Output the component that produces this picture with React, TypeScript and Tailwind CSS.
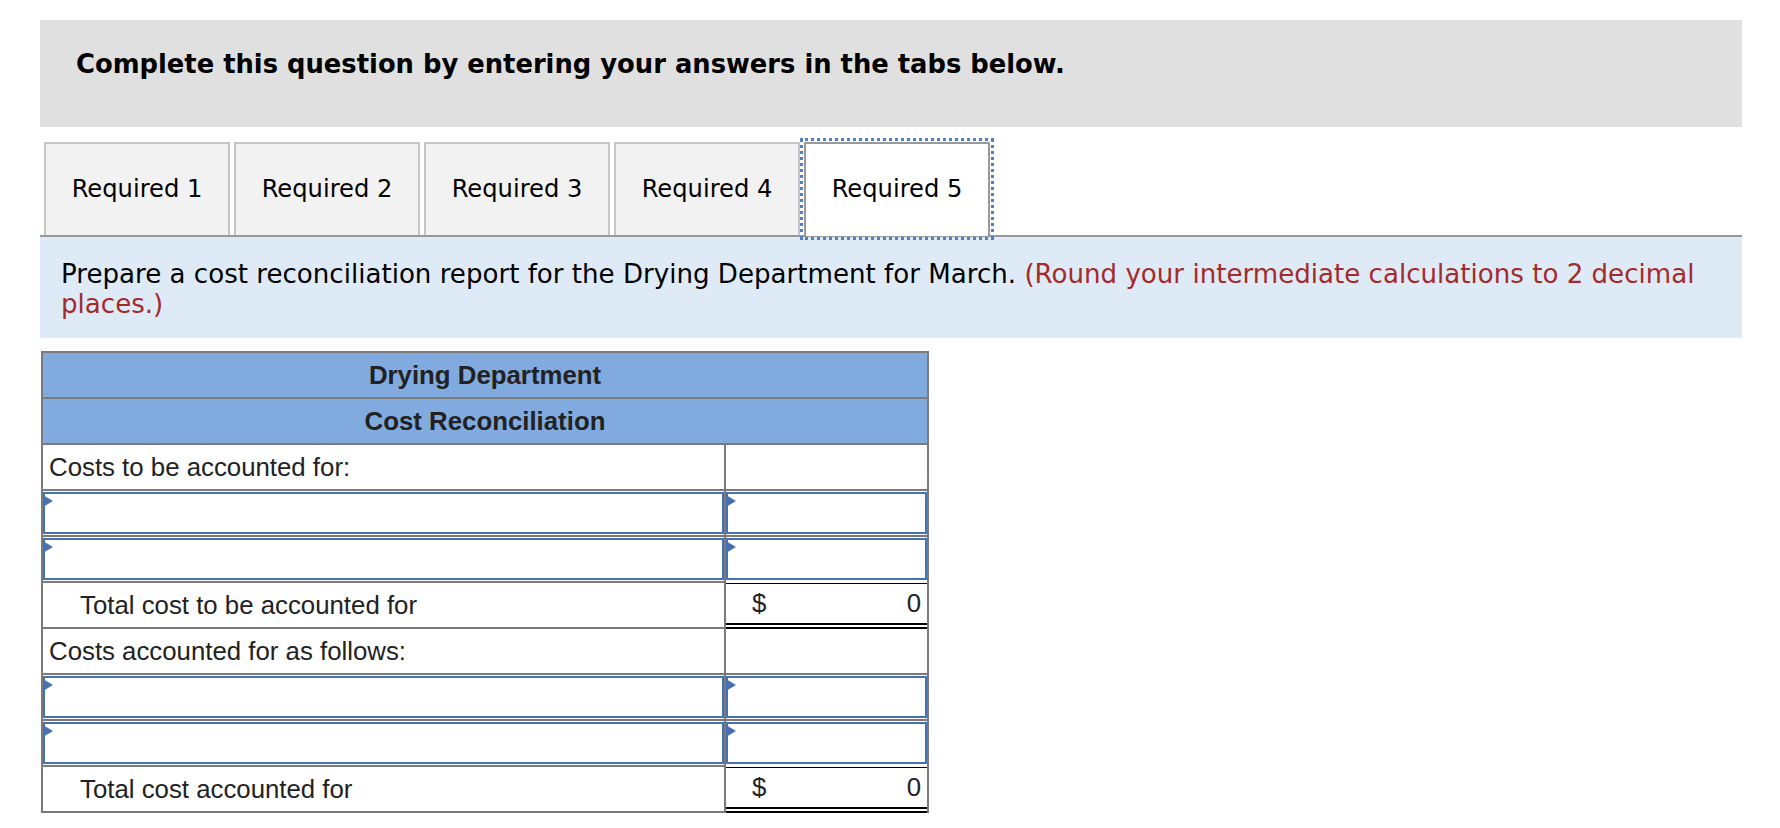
import React from "react";

type Row =
  | { kind: "header"; text: string }
  | { kind: "label"; text: string }
  | { kind: "input"; beforeTotal?: boolean }
  | { kind: "total"; text: string };

const rows: Row[] = [
  { kind: "header", text: "Drying Department" },
  { kind: "header", text: "Cost Reconciliation" },
  { kind: "label", text: "Costs to be accounted for:" },
  { kind: "input" },
  { kind: "input", beforeTotal: true },
  { kind: "total", text: "Total cost to be accounted for" },
  { kind: "label", text: "Costs accounted for as follows:" },
  { kind: "input" },
  { kind: "input", beforeTotal: true },
  { kind: "total", text: "Total cost accounted for" },
];

const tabs = ["Required 1", "Required 2", "Required 3", "Required 4", "Required 5"];

function InputBox() {
  return (
    <div className="relative mt-px mb-px h-[42px] w-full border-2 border-[#4672b5] bg-white">
      <div className="absolute -left-[2px] top-[1px] h-0 w-0 border-y-[6px] border-l-[10px] border-y-transparent border-l-[#4672b5]" />
    </div>
  );
}

function TableRow({ row }: { row: Row }) {
  if (row.kind === "header") {
    return (
      <div className="flex h-[46px] items-center justify-center border-b-2 border-[#7a7a7a] bg-[#81aadf] text-[25.8px] font-bold text-[#222]">
        {row.text}
      </div>
    );
  }
  if (row.kind === "label") {
    return (
      <div className="flex h-[46px]">
        <div className="flex w-[683px] items-center border-r-2 border-b-2 border-[#7a7a7a] pl-[6px] text-[25.8px] text-[#222]">
          {row.text}
        </div>
        <div className="flex-1 border-b-2 border-[#7a7a7a]" />
      </div>
    );
  }
  if (row.kind === "input") {
    return (
      <div className="flex h-[46px]">
        <div className="flex w-[683px] items-start border-r-2 border-b-2 border-[#7a7a7a]">
          <InputBox />
        </div>
        <div
          className={
            row.beforeTotal
              ? "flex flex-1 items-start border-b-2 border-white"
              : "flex flex-1 items-start border-b-2 border-[#7a7a7a]"
          }
        >
          <InputBox />
        </div>
      </div>
    );
  }
  return (
    <div className="flex h-[46px]">
      <div className="flex w-[683px] items-center border-r-2 border-b-2 border-[#7a7a7a] pl-[37px] text-[25.8px] text-[#222]">
        {row.text}
      </div>
      <div className="flex flex-1 items-center justify-between border-t border-b-[6px] border-t-black border-b-black border-double pl-[26px] pr-[6px] text-[25.8px] text-[#222]">
        <span>$</span>
        <span>0</span>
      </div>
    </div>
  );
}

export default function App() {
  return (
    <div className="min-h-screen bg-white pl-[40px] pr-[38px] pt-[20px] font-['DejaVu_Sans',sans-serif] text-black">
      <div className="h-[107px] bg-[#e0e0e0] pl-[36px] pt-[29px]">
        <h1 className="text-[25.8px] font-bold leading-[30px]">
          Complete this question by entering your answers in the tabs below.
        </h1>
      </div>

      <div className="mt-[15px] flex items-start gap-[4px] border-b-2 border-[#999] pl-[4px]">
        {tabs.map((tab, i) =>
          i === tabs.length - 1 ? (
            <div
              key={tab}
              className="relative -mb-[2px] flex h-[94px] w-[186px] items-center justify-center border-2 border-b-0 border-[#999] bg-white pb-[1px] text-[24.2px] outline-[3px] outline-offset-1 outline-dotted outline-[#4f80c8]"
            >
              {tab}
            </div>
          ) : (
            <div
              key={tab}
              className="flex h-[93px] w-[186px] items-center justify-center border-2 border-b-0 border-[#c6c6c6] bg-[#f2f2f2] text-[24.2px]"
            >
              {tab}
            </div>
          )
        )}
      </div>

      <div className="h-[101px] bg-[#deebf7] px-[21px] pt-[22px] text-[26.1px] leading-[30px]">
        Prepare a cost reconciliation report for the Drying Department for March.{" "}
        <span className="text-[#a52a2a]">
          (Round your intermediate calculations to 2 decimal
          <br />
          places.)
        </span>
      </div>

      <div className="mt-[13px] ml-px w-[888px] border-x-2 border-t-2 border-[#7a7a7a] font-['Liberation_Sans',Arial,sans-serif]">
        {rows.map((row, i) => (
          <TableRow key={i} row={row} />
        ))}
      </div>
    </div>
  );
}
